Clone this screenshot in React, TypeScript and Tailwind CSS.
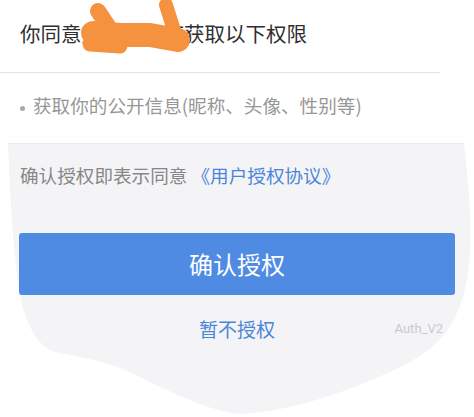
import React from 'react';

const cjk = { fontFamily: '"Noto Sans CJK SC", "Noto Sans", sans-serif' };

// irregular cut-out of the bottom sheet, drawn behind the content
const SheetShape = () => (
  <svg className="absolute inset-0" width="474" height="417" viewBox="0 0 474 417">
    <path
      d="M8,143 L464,143 C468,180 472,220 470,250 C468,290 460,310 448,330 C430,355 400,368 360,385 C320,400 280,412 240,414 C200,410 160,385 120,368 C95,358 70,356 55,352 C35,345 25,320 20,295 C14,260 10,200 8,143 Z"
      fill="#f4f4f7"
    />
    <line x1="8" y1="143.5" x2="464" y2="143.5" stroke="#ebebee" strokeWidth="1" />
  </svg>
);

// the hand-drawn orange mark hiding the app name
const Scribble = () => (
  <svg className="absolute left-[76px] top-0" width="114" height="58" viewBox="0 0 114 58">
    <g stroke="#f5923f" strokeLinecap="round" strokeLinejoin="round" fill="none">
      <path d="M17,33 L44,35 L74,35 L102,40" strokeWidth="24" />
      <path d="M14,44 L44,46" strokeWidth="15" />
      <path d="M22,11 L32,26" strokeWidth="16" />
      <path d="M90,5 L101,40" strokeWidth="14" />
    </g>
  </svg>
);

export default function App() {
  return (
    <div className="relative w-[474px] h-[417px] bg-white overflow-hidden" style={cjk}>
      <SheetShape />
      <div className="relative flex flex-col">
        <div className="relative h-[72px] pl-5 pb-[6px] flex items-center">
          <span className="text-[20.5px] leading-none text-[#2f2f2f]">
            你同意某某小程序获取以下权限
          </span>
          <Scribble />
        </div>
        <div className="h-px w-[440px] bg-[#e4e4e4]" />
        <div className="h-[70px] pl-5 pb-[6px] flex items-center gap-2">
          <span className="w-[5px] h-[5px] rounded-full bg-[#a8a8a8] translate-y-[3px]" />
          <span className="text-[18.6px] leading-none text-[#979797]">
            获取你的公开信息(昵称、头像、性别等)
          </span>
        </div>
        <div className="flex flex-col pt-[21px]">
          <p className="pl-5 text-[18.6px] leading-[22px] text-[#878787]">
            确认授权即表示同意 <span className="text-[#4a86d8]">《用户授权协议》</span>
          </p>
          <div className="mx-[19px] mt-[47px] flex flex-col">
            <button className="h-[62px] w-full rounded-[3px] bg-[#4f8be2] text-white text-[24px] leading-none">
              确认授权
            </button>
            <div className="h-[67px] grid grid-cols-[1fr_auto_1fr] items-center">
              <span />
              <span className="text-[19px] leading-none text-[#4a86d8]">暂不授权</span>
              <span
                className="justify-self-end pr-[12px] text-[13px] leading-none text-[#c9c9cc]"
                style={{ fontFamily: 'Roboto, "Liberation Sans", sans-serif' }}
              >
                Auth_V2
              </span>
            </div>
          </div>
        </div>
      </div>
    </div>
  );
}
